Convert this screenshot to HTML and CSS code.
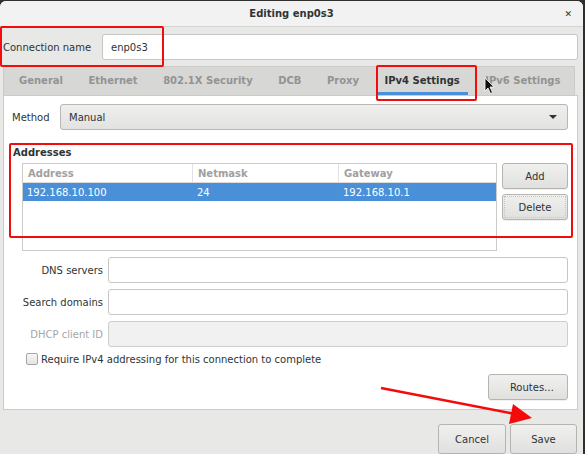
FILE: index.html
```html
<!DOCTYPE html>
<html>
<head>
<meta charset="utf-8">
<link rel="stylesheet" href="styles.css">
</head>
<body>
<div class="window">
  <div class="titlebar">
    <span class="title">Editing enp0s3</span>
    <span class="close">&#x2715;</span>
  </div>
  <div class="main">
    <div class="name-row">
      <label class="name-label">Connection name</label>
      <div class="entry name-entry">enp0s3</div>
    </div>
    <div class="notebook">
      <div class="tabs">
        <div class="tab">General</div>
        <div class="tab">Ethernet</div>
        <div class="tab">802.1X Security</div>
        <div class="tab">DCB</div>
        <div class="tab">Proxy</div>
        <div class="tab active">IPv4 Settings</div>
        <div class="tab">IPv6 Settings</div>
      </div>
      <div class="page">
        <div class="method-row">
          <label class="method-label">Method</label>
          <div class="combo"><span>Manual</span><span class="arrow"></span></div>
        </div>
        <div class="addresses-title">Addresses</div>
        <div class="addresses">
          <div class="table">
            <div class="thead">
              <div class="th c1">Address</div>
              <div class="th c2">Netmask</div>
              <div class="th c3">Gateway</div>
            </div>
            <div class="tr selected">
              <div class="td c1">192.168.10.100</div>
              <div class="td c2">24</div>
              <div class="td c3">192.168.10.1</div>
            </div>
          </div>
          <div class="side-buttons">
            <div class="button">Add</div>
            <div class="button dotted">Delete</div>
          </div>
        </div>
        <div class="form">
          <label class="flabel">DNS servers</label>
          <div class="entry"></div>
          <label class="flabel">Search domains</label>
          <div class="entry"></div>
          <label class="flabel disabled">DHCP client ID</label>
          <div class="entry disabled-entry"></div>
        </div>
        <div class="check-row">
          <span class="checkbox"></span>
          <span>Require IPv4 addressing for this connection to complete</span>
        </div>
        <div class="routes-row">
          <div class="button routes">Routes…</div>
        </div>
      </div>
    </div>
    <div class="dialog-buttons">
      <div class="button dbtn">Cancel</div>
      <div class="button dbtn">Save</div>
    </div>
  </div>

  <div class="mark mark-name"></div>
  <div class="mark mark-tab"></div>
  <div class="mark mark-addr"></div>
  <svg class="arrow-anno" width="585" height="454" viewBox="0 0 585 454">
    <line x1="381" y1="388" x2="515" y2="414" stroke="#f40a0a" stroke-width="2.5"/>
    <polygon points="532,418 509,424 513,404" fill="#f40a0a"/>
  </svg>
  <svg class="cursor" width="12" height="18" viewBox="0 0 12 18">
    <path d="M1 1 L1 14 L4 11 L6.5 16.5 L8.5 15.5 L6 10 L10 10 Z" fill="#111" stroke="#fff" stroke-width="0.8"/>
  </svg>
</div>
</body>
</html>
```

FILE: styles.css
```css
* { box-sizing: border-box; }
html, body { margin: 0; padding: 0; }
body {
  width: 585px;
  height: 454px;
  background: #2f2f2f;
  font-family: "DejaVu Sans", sans-serif;
  font-size: 10px;
  color: #2e3436;
  overflow: hidden;
}
.window {
  position: relative;
  width: 583px;
  height: 454px;
  margin-top: 1px;
  background: #e8e8e7;
  border-radius: 6px 6px 0 0;
  display: flex;
  flex-direction: column;
}
.titlebar {
  height: 26px;
  flex: none;
  background: #f2f2f2;
  border-bottom: 1px solid #d4d4d2;
  border-radius: 6px 6px 0 0;
  display: flex;
  align-items: center;
  justify-content: center;
  position: relative;
}
.title { font-weight: bold; color: #2e3436; }
.close {
  position: absolute;
  right: 11px;
  top: 8px;
  font-size: 9px;
  font-weight: bold;
  color: #2e3436;
}
.main {
  flex: 1;
  display: flex;
  flex-direction: column;
  padding: 7px 5px 0 3px;
}
.name-row {
  display: flex;
  align-items: center;
  height: 26px;
}
.name-label { width: 99px; flex: none; }
.entry {
  height: 26px;
  background: #fff;
  border: 1px solid #c8c6c2;
  border-radius: 3px;
  padding: 0 7px;
  display: flex;
  align-items: center;
}
.name-entry { flex: 1; padding-left: 8px; }
.notebook {
  margin-top: 6px;
  display: flex;
  flex-direction: column;
}
.tabs {
  height: 29px;
  background: #d7d7d5;
  border: 1px solid #cdcbc8;
  border-bottom: none;
  display: flex;
  align-items: stretch;
  padding-left: 7px;
  gap: 9.5px;
  margin-right: 3px;
}
.tab {
  padding: 0 8px;
  display: flex;
  align-items: center;
  font-weight: bold;
  color: #939393;
  border-bottom: 3px solid transparent;
  padding-top: 2px;
}
.tab.active {
  color: #2e3436;
  border-bottom-color: #4a90d9;
}
.page {
  background: #fff;
  border: 1px solid #cdcbc8;
  padding: 8px 9px 9px 8px;
  display: flex;
  flex-direction: column;
}
.method-row {
  display: flex;
  align-items: center;
  height: 26px;
}
.method-label { width: 48px; flex: none; }
.combo {
  flex: 1;
  height: 26px;
  border: 1px solid #b9b7b3;
  border-radius: 3px;
  background: linear-gradient(#efefee, #e2e2e0);
  display: flex;
  align-items: center;
  justify-content: space-between;
  padding: 0 10px 0 8px;
}
.arrow {
  width: 0;
  height: 0;
  border-left: 4px solid transparent;
  border-right: 4px solid transparent;
  border-top: 4px solid #2e3436;
}
.addresses-title {
  font-weight: bold;
  margin-top: 16px;
  margin-left: 1px;
  height: 13px;
  line-height: 13px;
}
.addresses {
  display: flex;
  margin-top: 4px;
  margin-left: 10px;
  gap: 5px;
}
.table {
  width: 475px;
  height: 88px;
  border: 1px solid #cdcbc8;
  background: #fff;
}
.thead {
  display: flex;
  height: 19px;
  border-bottom: 1px solid #dedcda;
}
.th {
  font-weight: bold;
  color: #a0a0a0;
  padding-left: 5px;
  display: flex;
  align-items: center;
  border-right: 1px solid #e4e2e0;
}
.th.c3 { border-right: none; }
.c1 { width: 170px; }
.c2 { width: 146px; }
.c3 { flex: 1; }
.tr { display: flex; height: 18px; }
.tr.selected { background: #4a90d9; color: #fff; }
.td { padding-left: 4px; display: flex; align-items: center; }
.side-buttons {
  display: flex;
  flex-direction: column;
  gap: 5px;
}
.button {
  height: 26px;
  border: 1px solid #b6b4b0;
  border-radius: 3px;
  background: linear-gradient(#f0f0ef, #e0e0de);
  box-shadow: 0 1px 0 rgba(0,0,0,0.06);
  display: flex;
  align-items: center;
  justify-content: center;
  color: #2e3436;
}
.side-buttons .button { width: 66px; }
.button.dotted { outline: 1px dotted #c4c4c2; outline-offset: -3px; }
.form {
  display: grid;
  grid-template-columns: 91px 1fr;
  column-gap: 5px;
  row-gap: 6px;
  margin-top: 6px;
  align-items: center;
}
.flabel { text-align: right; }
.flabel.disabled { color: #a4a6a6; }
.disabled-entry { background: #f1f1f1; border-color: #cfcdca; }
.check-row {
  display: flex;
  align-items: center;
  margin-top: 6px;
  margin-left: 14px;
  gap: 3px;
  height: 12px;
}
.checkbox {
  width: 12px;
  height: 12px;
  border: 1px solid #a8a6a2;
  border-radius: 2px;
  background: linear-gradient(#f6f6f5, #e4e4e2);
}
.routes-row {
  display: flex;
  justify-content: flex-end;
  margin-top: 9px;
}
.routes { width: 80px; padding-left: 8px; }
.dialog-buttons {
  display: flex;
  justify-content: flex-end;
  gap: 4px;
  margin-top: 14px;
  margin-right: 1px;
}
.dbtn { height: 30px; width: 68px; }
.dbtn + .dbtn { width: 67px; }

.mark {
  position: absolute;
  border: 2px solid #f20c0c;
  border-radius: 2px;
  pointer-events: none;
}
.mark-name { left: 0; top: 25px; width: 164px; height: 41px; }
.mark-tab { left: 376px; top: 64px; width: 101px; height: 36px; }
.mark-addr { left: 9px; top: 142px; width: 564px; height: 95px; }
.arrow-anno { position: absolute; left: 0; top: -1px; pointer-events: none; }
.cursor { position: absolute; left: 484px; top: 76px; }
```
